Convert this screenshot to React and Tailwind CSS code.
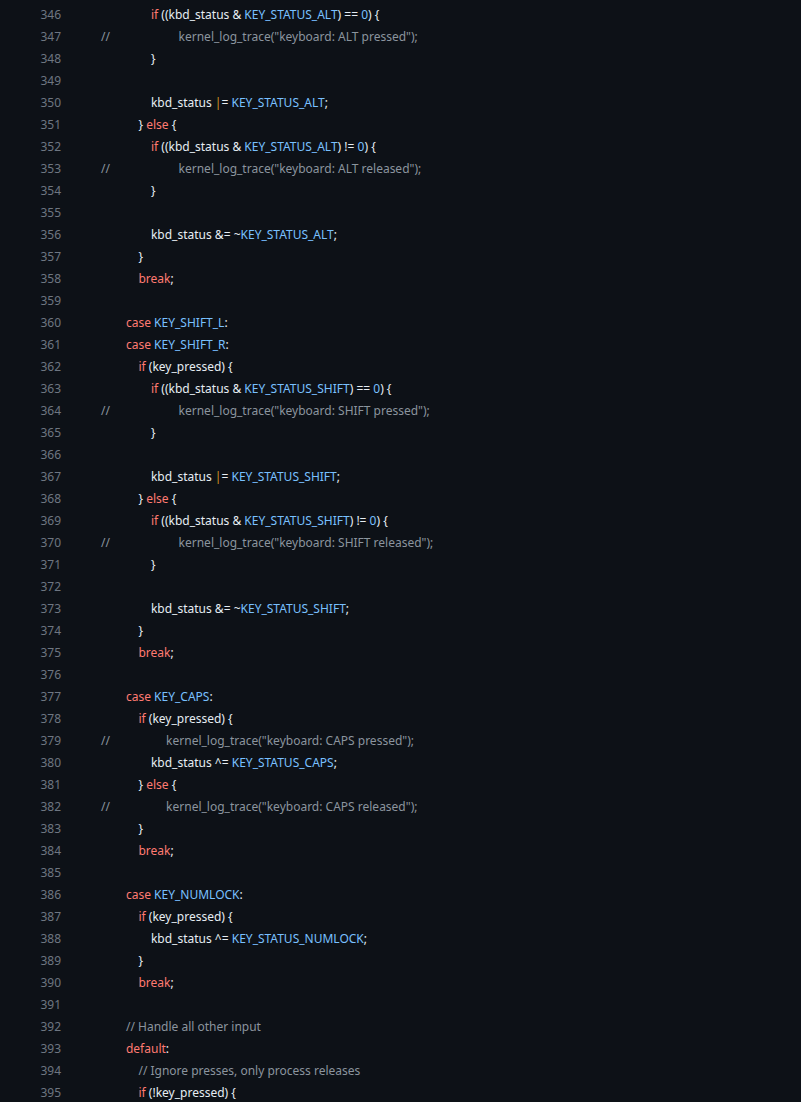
const lines = [
  "                if ((kbd_status & KEY_STATUS_ALT) == 0) {",
  "//                      kernel_log_trace(\"keyboard: ALT pressed\");",
  "                }",
  "",
  "                kbd_status |= KEY_STATUS_ALT;",
  "            } else {",
  "                if ((kbd_status & KEY_STATUS_ALT) != 0) {",
  "//                      kernel_log_trace(\"keyboard: ALT released\");",
  "                }",
  "",
  "                kbd_status &= ~KEY_STATUS_ALT;",
  "            }",
  "            break;",
  "",
  "        case KEY_SHIFT_L:",
  "        case KEY_SHIFT_R:",
  "            if (key_pressed) {",
  "                if ((kbd_status & KEY_STATUS_SHIFT) == 0) {",
  "//                      kernel_log_trace(\"keyboard: SHIFT pressed\");",
  "                }",
  "",
  "                kbd_status |= KEY_STATUS_SHIFT;",
  "            } else {",
  "                if ((kbd_status & KEY_STATUS_SHIFT) != 0) {",
  "//                      kernel_log_trace(\"keyboard: SHIFT released\");",
  "                }",
  "",
  "                kbd_status &= ~KEY_STATUS_SHIFT;",
  "            }",
  "            break;",
  "",
  "        case KEY_CAPS:",
  "            if (key_pressed) {",
  "//                  kernel_log_trace(\"keyboard: CAPS pressed\");",
  "                kbd_status ^= KEY_STATUS_CAPS;",
  "            } else {",
  "//                  kernel_log_trace(\"keyboard: CAPS released\");",
  "            }",
  "            break;",
  "",
  "        case KEY_NUMLOCK:",
  "            if (key_pressed) {",
  "                kbd_status ^= KEY_STATUS_NUMLOCK;",
  "            }",
  "            break;",
  "",
  "        // Handle all other input",
  "        default:",
  "            // Ignore presses, only process releases",
  "            if (!key_pressed) {",
];

const KEYWORDS = new Set(["if", "else", "break", "case", "default"]);

function renderLine(text) {
  if (text.trim().startsWith("//")) {
    return <span className="text-[#8b949e]">{text}</span>;
  }
  const parts = text.split(/(\s+|[A-Za-z_][A-Za-z0-9_]*|\d+|\|(?==)|.)/).filter(Boolean);
  return parts.map((p, i) => {
    if (KEYWORDS.has(p)) return <span key={i} className="text-[#ff7b72]">{p}</span>;
    if (/^[A-Z][A-Z0-9_]*$/.test(p) || /^\d+$/.test(p))
      return <span key={i} className="text-[#79c0ff]">{p}</span>;
    if (p === "|") return <span key={i} className="text-[#d29922]">{p}</span>;
    return <span key={i}>{p}</span>;
  });
}

export default function App() {
  return (
    <div className="min-h-[1102px] w-[801px] bg-[#0d1117] pt-[4px] text-[12px] text-[#e6edf3] font-['DejaVu_Sans_Mono'] overflow-hidden">
      {lines.map((line, i) => (
        <div key={i} className="flex h-[22px] items-center whitespace-pre">
          <span className="w-[61px] shrink-0 text-right text-[#6e7681]">{346 + i}</span>
          <span className="pl-[40px]">{renderLine(line)}</span>
        </div>
      ))}
    </div>
  );
}
